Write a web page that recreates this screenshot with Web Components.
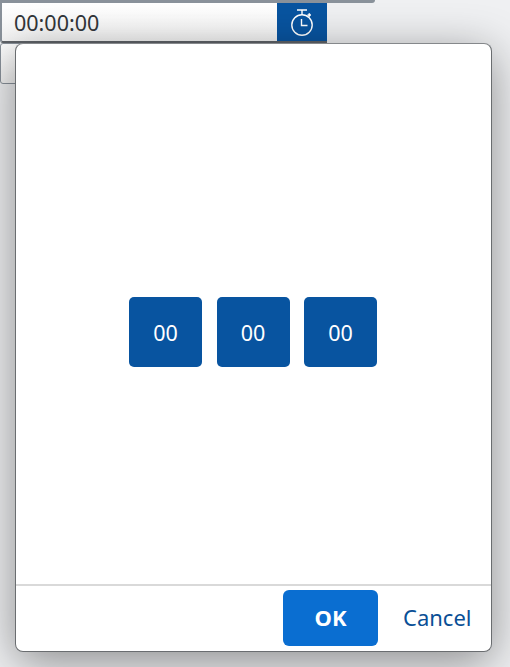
<!DOCTYPE html>
<html>
<head>
<meta charset="utf-8">
<style>
    html, body { margin: 0; height: 100%; }
    body { background: #eff0f2; font-family: 'Noto Sans', 'Open Sans', sans-serif; overflow: hidden; }
</style>
</head>
<body>
<time-page></time-page>

<script>
class TimeField extends HTMLElement {
    constructor() {
        super();
        this.attachShadow({mode: 'open'}).innerHTML = `
        <style>
            :host { display: flex; width: 327px; height: 40px; box-sizing: border-box; }
            .value {
                flex: 1;
                box-sizing: border-box;
                padding-left: 12px;
                line-height: 39px;
                font-size: 21.5px;
                color: #32363a;
                background: linear-gradient(#ffffff, #f4f4f4);
                border-left: 2px solid #89919a;
                border-bottom: 2px solid #5f6368;
                border-radius: 0 0 0 3px;
            }
            .icon {
                width: 50px;
                background: #0854a0;
                border-bottom: 2px solid #5f6368;
                box-sizing: border-box;
                display: flex;
                align-items: center;
                justify-content: center;
            }
        </style>
        <div class="value"><slot></slot></div>
        <div class="icon">
            <svg width="26" height="32" viewBox="0 0 26 32" fill="none" stroke="#fff" stroke-width="1.4">
                <circle cx="13" cy="19" r="10.2"/>
                <path d="M13 9V4.5M8 4h10M12.5 13v6.5H18.5"/>
                <path d="M18.5 9l3.5 0M20.3 7.2v3.6" stroke-width="1.5"/>
            </svg>
        </div>
        `;
    }
}

class TimeCell extends HTMLElement {
    constructor() {
        super();
        this.attachShadow({mode: 'open'}).innerHTML = `
        <style>
            :host {
                display: flex;
                align-items: center;
                justify-content: center;
                width: 73px;
                height: 70px;
                border-radius: 5px;
                background: #0854a0;
                color: #fff;
                font-size: 21.5px;
            }
        </style>
        <slot></slot>
        `;
    }
}

class TimeDialog extends HTMLElement {
    constructor() {
        super();
        this.attachShadow({mode: 'open'}).innerHTML = `
        <style>
            :host {
                position: absolute;
                left: 15px;
                top: 43px;
                width: 477px;
                height: 609px;
                box-sizing: border-box;
                display: flex;
                flex-direction: column;
                background: #fff;
                border: 1px solid #6a6d70;
                border-top-color: #85888b;
                border-radius: 8px;
                box-shadow: 0 10px 46px rgba(0,0,0,.42);
            }
            .content {
                flex: 1;
                display: flex;
                align-items: center;
                justify-content: center;
                gap: 14.5px;
                padding: 36px 1px 0 0;
            }
            .footer {
                height: 67px;
                box-sizing: border-box;
                border-top: 2px solid #d9d9d9;
                display: flex;
                align-items: flex-start;
                padding: 4px 0 0 267px;
            }
            .ok {
                width: 95px;
                height: 54px;
                padding-bottom: 2px;
                border-radius: 6px;
                background: #0a6ed1;
                color: #fff;
                font-size: 22px;
                font-weight: 700;
                display: flex;
                align-items: center;
                justify-content: center;
            }
            .cancel {
                margin-left: 25px;
                line-height: 54px;
                font-size: 22px;
                color: #0a4f96;
            }
        </style>
        <div class="content"><slot></slot></div>
        <div class="footer">
            <div class="ok">OK</div>
            <div class="cancel">Cancel</div>
        </div>
        `;
    }
}

class TimePage extends HTMLElement {
    constructor() {
        super();
        this.attachShadow({mode: 'open'}).innerHTML = `
        <style>
            :host { display: block; position: relative; height: 667px; overflow: hidden; }
            .strip { width: 375px; height: 3px; background: #89919a; border-radius: 0 0 3px 0; }
            .under {
                width: 100px;
                height: 41px;
                box-sizing: border-box;
                background: linear-gradient(#ffffff, #f2f2f2);
                border: 1px solid #89919a;
                border-radius: 3px;
            }
        </style>
        <div class="strip"></div>
        <time-field>00:00:00</time-field>
        <div class="under"></div>
        <time-dialog>
            <time-cell>00</time-cell>
            <time-cell>00</time-cell>
            <time-cell>00</time-cell>
        </time-dialog>
        `;
    }
}

customElements.define('time-field', TimeField);
customElements.define('time-cell', TimeCell);
customElements.define('time-dialog', TimeDialog);
customElements.define('time-page', TimePage);
</script>
</body>
</html>
